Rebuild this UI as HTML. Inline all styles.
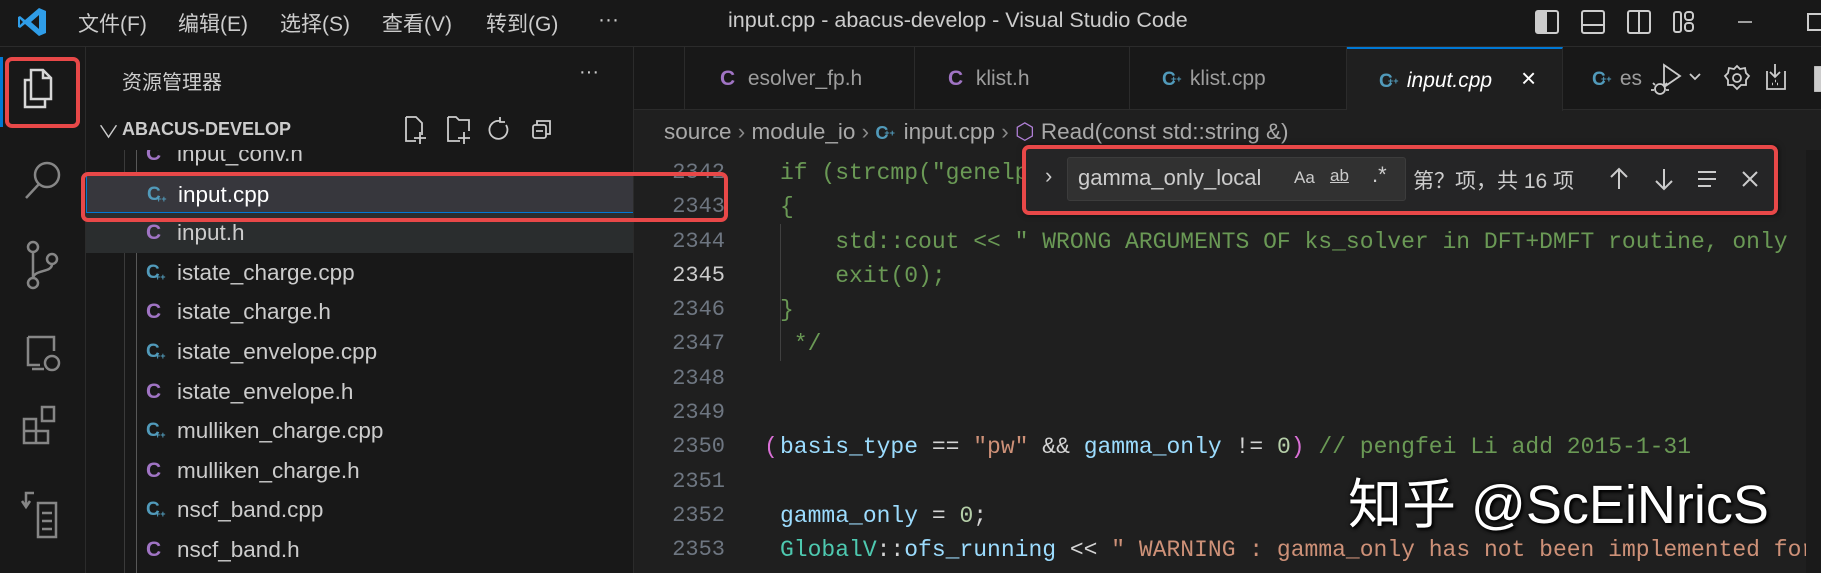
<!DOCTYPE html>
<html><head><meta charset="utf-8"><style>
*{margin:0;padding:0;box-sizing:border-box}
body{width:1821px;height:573px;overflow:hidden;background:#1f1f1f;position:relative;font-family:"Liberation Sans","Noto Sans CJK SC",sans-serif;color:#cccccc}
.a{position:absolute}
.title{left:0;top:0;width:1821px;height:47px;background:#181818;border-bottom:1px solid #2b2b2b}
.menu{top:8px;font-size:21px;color:#cccccc;white-space:nowrap}
.act{left:0;top:47px;width:86px;height:526px;background:#181818;border-right:1px solid #2b2b2b}
.side{left:86px;top:47px;width:548px;height:526px;background:#181818;border-right:1px solid #2b2b2b;overflow:hidden}
.tabs{left:634px;top:47px;width:1187px;height:63px;background:#181818;border-bottom:1px solid #2b2b2b}
.tab{position:absolute;top:0;height:63px;border-right:1px solid #2b2b2b;font-size:21px;color:#9d9d9d;padding-top:20px;white-space:nowrap}
.ci{font-weight:bold;color:#a074c4;font-size:21px;display:inline-block;width:22px}
.pi{font-weight:bold;color:#519aba;font-size:19px;display:inline-block;width:22px;position:relative}
.pi i{font-style:normal;font-size:9px;position:absolute;left:9px;top:5px}
.row{position:absolute;left:0;width:548px;height:39.6px;font-size:22.5px;color:#cccccc;line-height:39.6px;white-space:nowrap}
.row .ic{position:absolute;left:60px}
.row .t{position:absolute;left:91px}
.code{font-family:"Liberation Mono",monospace;font-size:23px;white-space:pre;position:absolute;line-height:34.3px}
.ln{position:absolute;left:640px;width:85px;text-align:right;font-family:"Liberation Mono",monospace;font-size:22px;color:#6e7681;line-height:34.3px}
.g{color:#6a9955}.b{color:#9cdcfe}.o{color:#ce9178}.w{color:#d4d4d4}.n{color:#b5cea8}.p{color:#da70d6}.t2{color:#4ec9b0}
.red{position:absolute;border:4px solid #e84848;border-radius:7px}
</style></head><body>
<div class="a title"></div>
<svg class="a" style="left:16px;top:6px" width="32" height="32" viewBox="0 0 32 32"><path d="M23 2 L30 5 V27 L23 30 L9 18 L4 22 L2 21 V11 L4 10 L9 14 Z M23 9 L15 16 L23 23 Z M4 13 V19 L7 16 Z" fill="#2f9de8"/></svg>
<div class="a menu" style="left:78px">文件(F)</div>
<div class="a menu" style="left:178px">编辑(E)</div>
<div class="a menu" style="left:280px">选择(S)</div>
<div class="a menu" style="left:382px">查看(V)</div>
<div class="a menu" style="left:486px">转到(G)</div>
<div class="a menu" style="left:598px">···</div>
<div class="a menu" style="left:728px;font-size:21.5px">input.cpp - abacus-develop - Visual Studio Code</div>
<svg class="a" style="left:1530px;top:6px" width="291" height="30" viewBox="0 0 291 30" fill="none" stroke="#cccccc" stroke-width="2"><rect x="6" y="5" width="22" height="22" rx="2"/><rect x="7" y="6" width="9" height="20" fill="#cccccc"/><rect x="52" y="5" width="22" height="22" rx="2"/><line x1="52" y1="19" x2="74" y2="19"/><rect x="98" y="5" width="22" height="22" rx="2"/><line x1="109" y1="5" x2="109" y2="27"/><rect x="144" y="6" width="7" height="20" rx="2"/><rect x="155" y="6" width="8" height="8" rx="3"/><rect x="155" y="17" width="8" height="8" rx="3"/><line x1="208" y1="16" x2="222" y2="16" stroke-width="1.5"/><rect x="278" y="8" width="16" height="16"/></svg>
<div class="a act"></div>
<div style="position:absolute;left:0;top:57px;width:3px;height:70px;background:#0078d4"></div>
<svg class="a" style="left:0;top:47px" width="86" height="526" viewBox="0 0 86 526" fill="none" stroke="#868686" stroke-width="2.5">
<g stroke="#d7d7d7"><path d="M31 23 H43 L51 31 V52 H31 Z M43 23 V31 H51"/><path d="M31 33 H25 V60 H45 V52"/></g>
<circle cx="47" cy="128" r="12"/><line x1="39" y1="137" x2="26" y2="151"/>
<circle cx="33" cy="200" r="5"/><circle cx="33" cy="236" r="5"/><circle cx="52" cy="212" r="5"/><path d="M33 205 V231 M52 217 C52 226 35 222 33 231"/>
<path d="M28 290 H54 V304 M28 290 V318 H40 M32 322 H44"/><circle cx="52" cy="316" r="7"/>
<path d="M24 372 H36 V384 H24 Z M24 384 H36 V396 H24 Z M36 384 H48 V396 H36 Z M42 360 H54 V374 H42 Z"/>
<path d="M38 456 H56 V490 H38 Z M42 466 H52 M42 474 H52 M42 482 H52 M34 446 H26 V460 M22 454 L26 460 L30 454"/>
</svg>
<div class="red" style="left:5px;top:57px;width:75px;height:71px"></div>
<div class="a side">
<div class="a" style="left:36px;top:19px;font-size:20px;color:#cccccc">资源管理器</div>
<div class="a" style="left:493px;top:14px;font-size:20px;color:#cccccc">···</div>
<div class="a" style="left:14px;top:71px;font-size:17px;color:#cccccc;transform:scaleX(1.3)">∨</div>
<div class="a" style="left:36px;top:72px;font-size:18px;font-weight:bold;color:#cccccc">ABACUS-DEVELOP</div>
<svg class="a" style="left:310px;top:64px" width="230" height="36" viewBox="0 0 230 36" fill="none" stroke="#cccccc" stroke-width="1.8"><path d="M10 6 H20 L26 12 V24 M10 6 V30 H20 M18 27 H30 M24 21 V33"/><path d="M52 6 H60 L63 9 H73 V20 M52 6 V30 H64 M62 27 H74 M68 21 V33"/><path d="M104 10 A9 9 0 1 0 110 14 M104 6 V11 H109"/><rect x="137" y="14" width="13" height="13" rx="2"/><path d="M141 14 V10 H154 V23 H150 M140 20 H147"/></svg>
<div class="a" style="left:0;top:103px;width:548px;height:423px;overflow:hidden">
<div class="a" style="left:38px;top:0;width:1px;height:423px;background:#3a3a3a"></div>
<div class="a" style="left:50px;top:0;width:1px;height:423px;background:#585858"></div>
<div class="row" style="top:-16px"><span class="ic ci">C</span><span class="t">input_conv.h</span></div>
<div class="row" style="top:23.6px;background:#37373d;border:1px solid #0078d4"><span class="ic pi">C<i>++</i></span><span class="t" style="color:#fff">input.cpp</span></div>
<div class="row" style="top:63.2px;background:#2a2d2e"><span class="ic ci">C</span><span class="t">input.h</span></div>
<div class="row" style="top:102.8px"><span class="ic pi">C<i>++</i></span><span class="t">istate_charge.cpp</span></div>
<div class="row" style="top:142.4px"><span class="ic ci">C</span><span class="t">istate_charge.h</span></div>
<div class="row" style="top:182px"><span class="ic pi">C<i>++</i></span><span class="t">istate_envelope.cpp</span></div>
<div class="row" style="top:221.6px"><span class="ic ci">C</span><span class="t">istate_envelope.h</span></div>
<div class="row" style="top:261.2px"><span class="ic pi">C<i>++</i></span><span class="t">mulliken_charge.cpp</span></div>
<div class="row" style="top:300.8px"><span class="ic ci">C</span><span class="t">mulliken_charge.h</span></div>
<div class="row" style="top:340.4px"><span class="ic pi">C<i>++</i></span><span class="t">nscf_band.cpp</span></div>
<div class="row" style="top:380px"><span class="ic ci">C</span><span class="t">nscf_band.h</span></div>
</div>
</div>
<div class="a tabs">
<div class="tab" style="left:0;width:51px"></div>
<div class="tab" style="left:51px;width:230px;padding-left:35px"><span class="ci">C</span> esolver_fp.h</div>
<div class="tab" style="left:281px;width:215px;padding-left:33px"><span class="ci">C</span> klist.h</div>
<div class="tab" style="left:496px;width:217px;padding-left:32px"><span class="pi">C<i>++</i></span> klist.cpp</div>
<div class="tab" style="left:713px;width:216px;padding-left:32px;background:#1f1f1f;border-top:2px solid #0078d4;color:#fff;height:64px"><span class="pi">C<i>++</i></span> <i>input.cpp</i><span style="position:absolute;left:174px;top:14px;font-size:26px">×</span></div>
<div class="tab" style="left:929px;width:258px;padding-left:29px;border:none"><span class="pi">C<i>++</i></span> es</div>
</div>
<svg class="a" style="left:1650px;top:57px" width="171" height="44" viewBox="0 0 171 44" fill="none" stroke="#cccccc" stroke-width="1.8"><path d="M14 8 V30 L30 19 Z"/><circle cx="10" cy="32" r="5" fill="#181818"/><path d="M5 28 L3 26 M15 28 L17 26 M4 33 H1 M16 33 H19"/><path d="M40 17 L45 22 L50 17"/><circle cx="87" cy="21" r="4"/><path d="M87 9 L90 12 L95 11 L96 16 L99 19 L96 23 L96 28 L91 28 L87 32 L83 28 L78 28 L78 23 L75 19 L78 16 L79 11 L84 12 Z"/><path d="M125 7 V20 M120 15 L125 20 L130 15 M117 14 V32 H135 V14"/><path d="M122 27 h1 M127 27 h1 M125 24 h1" stroke-width="2.5"/><rect x="165" y="10" width="6" height="24" fill="#cccccc"/></svg>
<div class="a" style="left:664px;top:119px;font-size:22.5px;color:#a9a9a9;white-space:nowrap">source <span style="color:#8a8a8a">›</span> module_io <span style="color:#8a8a8a">›</span> <span class="pi" style="font-size:18px">C<i>++</i></span> input.cpp <span style="color:#8a8a8a">›</span> <span style="color:#b180d7">⬡</span> Read(const std::string &amp;)</div>
<div class="ln" style="top:156px">2342<br>2343<br>2344<br><span style="color:#cccccc">2345</span><br>2346<br>2347<br>2348<br>2349<br>2350<br>2351<br>2352<br>2353</div>
<div class="a" style="left:770px;top:150px;width:1036px;height:423px;overflow:hidden">
<div class="a" style="left:10px;top:74px;width:1px;height:137px;background:#404040"></div>
<div class="code" style="left:10px;top:6px"><span class="g">if (strcmp("genelpa", ks_solver) != 0)
{
    std::cout &lt;&lt; " WRONG ARGUMENTS OF ks_solver in DFT+DMFT routine, only
    exit(0);
}
 */


</span><span class="b">basis_type</span><span class="w"> == </span><span class="o">"pw"</span><span class="w"> &amp;&amp; </span><span class="b">gamma_only</span><span class="w"> != </span><span class="n">0</span><span class="p">)</span><span class="g"> // pengfei Li add 2015-1-31</span>

<span class="b">gamma_only</span><span class="w"> = </span><span class="n">0</span><span class="w">;</span>
<span class="t2">GlobalV</span><span class="w">::</span><span class="b">ofs_running</span><span class="w"> &lt;&lt; </span><span class="o">" WARNING : gamma_only has not been implemented for</span></div>
</div>
<div class="a" style="left:768px;top:430px;width:6px;height:34px;overflow:hidden"><div class="code p" style="left:-4px;top:0">(</div></div>
<div class="a" style="left:1025px;top:147px;width:752px;height:66px;background:#252526;box-shadow:0 0 6px #000"></div>
<div class="a" style="left:1067px;top:157px;width:339px;height:44px;background:#313131;border:1px solid #3c3c3c;border-radius:3px"></div>
<div class="a" style="left:1045px;top:163px;font-size:22px;color:#cccccc">›</div>
<div class="a" style="left:1078px;top:165px;font-size:22px;color:#cccccc">gamma_only_local</div>
<div class="a" style="left:1294px;top:168px;font-size:17px;color:#cccccc">Aa</div>
<div class="a" style="left:1330px;top:166px;font-size:17px;color:#cccccc;text-decoration:underline">ab</div>
<div class="a" style="left:1372px;top:162px;font-size:22px;color:#cccccc">.*</div>
<div class="a" style="left:1413px;top:165px;font-size:21px;color:#cccccc">第？项，共 16 项</div>
<svg class="a" style="left:1605px;top:162px" width="160" height="34" viewBox="0 0 160 34" fill="none" stroke="#cccccc" stroke-width="2"><path d="M14 27 V7 M6 15 L14 7 L22 15"/><path d="M59 7 V27 M51 19 L59 27 L67 19"/><path d="M93 10 H111 M93 17 H111 M93 24 H106"/><path d="M138 10 L152 24 M152 10 L138 24"/></svg>
<div class="red" style="left:1022px;top:145px;width:756px;height:70px"></div>
<div class="red" style="left:81px;top:172px;width:647px;height:50px"></div>
<div class="a" style="left:1348px;top:460px;font-size:54px;color:#fff;white-space:nowrap;text-shadow:2px 2px 3px #000,0 0 4px #000">知乎 @ScEiNricS</div>
<div class="a" style="left:1806px;top:150px;width:15px;height:423px;background:#1a1a1a"></div>
</body></html>
